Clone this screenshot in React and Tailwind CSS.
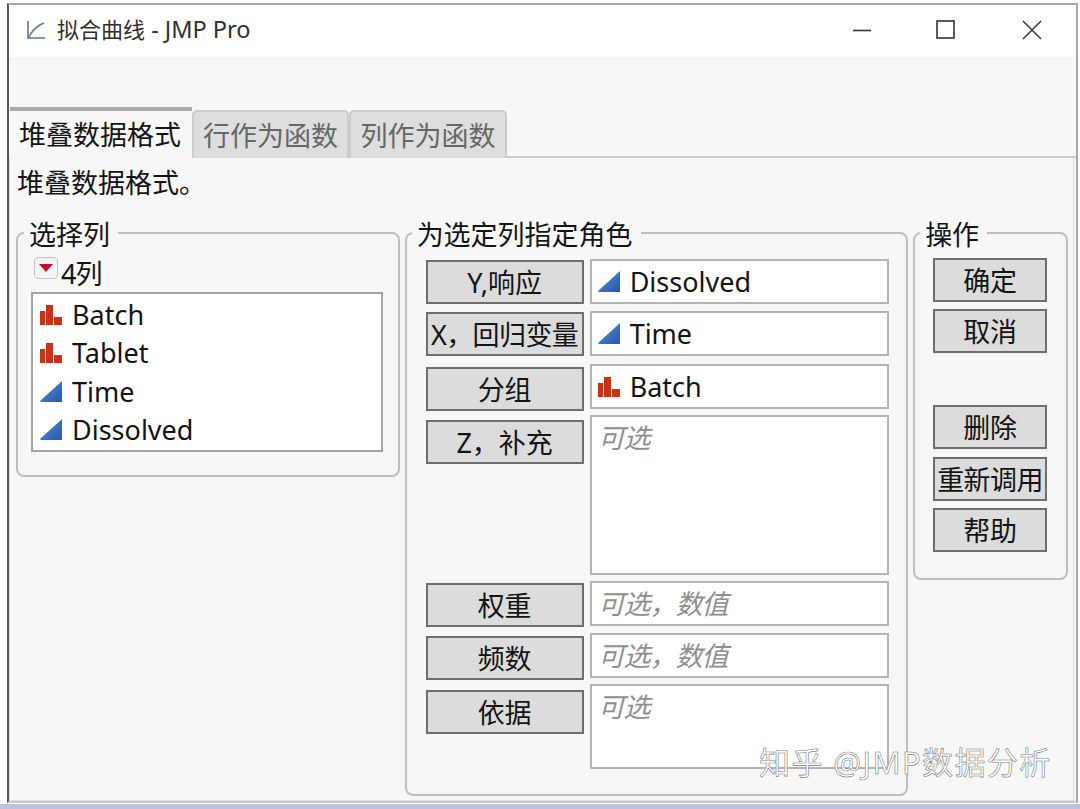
import React from 'react';

const font = { fontFamily: '"Noto Sans", "Noto Sans CJK SC", sans-serif' };

const ContinuousIcon = () => (
    <svg width="22" height="22" viewBox="0 0 22 22" className="shrink-0">
        <defs>
            <linearGradient id="tri" x1="0" y1="0" x2="1" y2="1">
                <stop offset="0" stopColor="#5a8edb" />
                <stop offset="1" stopColor="#2559a8" />
            </linearGradient>
        </defs>
        <path d="M0 20 L22 0 L22 21 L1 21 Z" fill="url(#tri)" />
    </svg>
);

const NominalIcon = () => (
    <svg width="22" height="22" viewBox="0 0 22 22" className="shrink-0">
        <path d="M0 7h5.2v14H0zM6 1h7v20H6zM14 13h8v8h-8z" fill="#cc3018" />
    </svg>
);

const ColumnItem = ({ type, name }) => (
    <div className="flex items-center h-[38.5px]">
        <div className="w-[32px] flex pt-[1px]">{type === 'nominal' ? <NominalIcon /> : <ContinuousIcon />}</div>
        <span className="text-[27px] leading-none text-[#141414]">{name}</span>
    </div>
);

const RoleButton = ({ label, mt, h = 'h-[44px]', tight }) => (
    <button className={`w-[158px] ${h} ${mt} bg-[#dcdcdc] border-2 border-[#6e6e6e] flex items-center justify-center leading-none text-[27px] text-[#141414] whitespace-nowrap ${tight ? 'tracking-[-0.6px]' : ''}`}>
        {label}
    </button>
);

const RoleField = ({ h, mt, children }) => (
    <div className={`w-[299px] ${h} ${mt} bg-white border-2 border-[#b4b4b4] flex items-start px-[4px] text-[27px] leading-none`}>
        {children}
    </div>
);

const Hint = ({ children }) => <span className="italic text-[#8f8f8f] mt-[7px] ml-[2px] tracking-[-1px]">{children}</span>;

const Filled = ({ type, name }) => (
    <div className="flex items-center h-full pl-[2px]">
        <div className="w-[32px] flex">{type === 'nominal' ? <NominalIcon /> : <ContinuousIcon />}</div>
        <span className="text-[#141414]">{name}</span>
    </div>
);

const ActionButton = ({ label, mt, tight }) => (
    <button className={`w-[114px] h-[44px] ${mt} bg-[#dcdcdc] border-2 border-[#6e6e6e] flex items-center justify-center leading-none text-[27px] text-[#141414] whitespace-nowrap ${tight ? 'tracking-[-0.5px]' : ''}`}>
        {label}
    </button>
);

const Group = ({ title, className, legendClass, children }) => (
    <fieldset className={`border-2 border-[#c0c0c0] rounded-[8px] min-w-0 ${className}`}>
        <legend className={`pl-[5px] pr-[8px] pt-[4px] text-[27px] leading-[30px] text-[#141414] whitespace-nowrap ${legendClass}`}>{title}</legend>
        {children}
    </fieldset>
);

export default function App() {
    return (
        <div style={font} className="relative w-[1080px] h-[809px] bg-white overflow-hidden pt-[3px] pl-[7px]">
            <div className="w-[1071px] h-[800px] bg-[#f7f7f7] border-2 border-t-[#a8a8a8] border-r-[#a8a8a8] border-l-[#555555] border-b-[#c8c8c8]">
                {/* title bar */}
                <div className="h-[52px] bg-white flex items-center pl-[17px] pb-[2px]">
                    <svg width="20" height="20" viewBox="0 0 20 20" className="shrink-0">
                        <path d="M2 1 V18 H19" fill="none" stroke="#5f7690" strokeWidth="1.6" />
                        <path d="M3 17 C6 11 10 6 18 3" fill="none" stroke="#5f7690" strokeWidth="1.6" />
                    </svg>
                    <span className="ml-[11px] text-[22px] leading-none text-[#303030] whitespace-nowrap">拟合曲线<span className="text-[23.5px]"> - JMP Pro</span></span>
                    <div className="ml-auto flex items-center text-[#333333]">
                        <svg width="20" height="20" viewBox="0 0 20 20" className="mr-[64px]"><path d="M1 10.5 H19" stroke="#333333" strokeWidth="1.6" /></svg>
                        <svg width="20" height="20" viewBox="0 0 20 20" className="mr-[65px]"><rect x="1" y="1" width="17" height="17" fill="none" stroke="#333333" strokeWidth="1.6" /></svg>
                        <svg width="22" height="22" viewBox="0 0 22 22" className="mr-[33px]"><path d="M2 2 L20 20 M20 2 L2 20" stroke="#333333" strokeWidth="1.5" /></svg>
                    </div>
                </div>

                {/* tabs */}
                <div className="flex items-end h-[101px] pl-[1px]">
                    <div className="w-[182px] h-[51px] bg-[#f7f7f7] border-t-[4px] border-[#aaaaaa] flex items-center pl-[9px] text-[27px] leading-none text-[#141414] whitespace-nowrap">堆叠数据格式</div>
                    <div className="w-[157px] h-[48px] bg-[#dedede] border-2 border-b-0 border-[#cccccc] rounded-t-[5px] flex items-center justify-center text-[27px] leading-none text-[#666666] whitespace-nowrap">行作为函数</div>
                    <div className="w-[158px] h-[48px] bg-[#dedede] border-2 border-b-0 border-[#cccccc] rounded-t-[5px] flex items-center justify-center text-[27px] leading-none text-[#666666] whitespace-nowrap">列作为函数</div>
                    <div className="flex-1 border-b-2 border-[#cccccc]" />
                </div>

                {/* tab body */}
                <div className="h-[643px] mr-[2px] border-x border-b border-[#dcdcdc] pl-[6px] pr-[5px]">
                    <div className="h-[46px] pl-[1px] pt-[11px] text-[27px] leading-none text-[#141414]">堆叠数据格式。</div>

                    <div className="flex items-start gap-[5px] mt-[12px]">
                        {/* column list */}
                        <Group title="选择列" className="w-[384px] h-[261px] px-[13px]" legendClass="-ml-[7px]">
                            <div className="flex items-center h-[38px] mt-[4px] pl-[3px]">
                                <div className="w-[24px] h-[22px] bg-[#f3f3f3] border border-[#c4c4c4] rounded-[4px] flex items-center justify-center mb-[10px]">
                                    <svg width="14" height="8" viewBox="0 0 14 8"><path d="M0 0 H14 L7 8 Z" fill="#c8102e" /></svg>
                                </div>
                                <span className="text-[27px] leading-none text-[#141414] tracking-[-1px] ml-[3px]">4列</span>
                            </div>
                            <div className="w-[352px] h-[160px] bg-white border-2 border-[#a4a4a4] pl-[7px] pt-[1px]">
                                <ColumnItem type="nominal" name="Batch" />
                                <ColumnItem type="nominal" name="Tablet" />
                                <ColumnItem type="continuous" name="Time" />
                                <ColumnItem type="continuous" name="Dissolved" />
                            </div>
                        </Group>

                        {/* roles */}
                        <Group title="为选定列指定角色" className="w-[504px] h-[580px] px-[19px]" legendClass="-ml-[14px]">
                            <div className="flex gap-[6px] mt-[9px]">
                                <div className="flex flex-col">
                                    <RoleButton label="Y,响应" mt="mt-[1px]" />
                                    <RoleButton label="X，回归变量" mt="mt-[8px]" tight />
                                    <RoleButton label="分组" mt="mt-[11px]" />
                                    <RoleButton label="Z，补充" mt="mt-[9px]" />
                                    <RoleButton label="权重" mt="mt-[119px]" />
                                    <RoleButton label="频数" mt="mt-[9px]" />
                                    <RoleButton label="依据" mt="mt-[10px]" />
                                </div>
                                <div className="flex flex-col">
                                    <RoleField h="h-[45px]"><Filled type="continuous" name="Dissolved" /></RoleField>
                                    <RoleField h="h-[45px]" mt="mt-[7px]"><Filled type="continuous" name="Time" /></RoleField>
                                    <RoleField h="h-[45px]" mt="mt-[8px]"><Filled type="nominal" name="Batch" /></RoleField>
                                    <RoleField h="h-[160px]" mt="mt-[6px]"><Hint>可选</Hint></RoleField>
                                    <RoleField h="h-[45px]" mt="mt-[6px]"><Hint>可选，数值</Hint></RoleField>
                                    <RoleField h="h-[45px]" mt="mt-[7px]"><Hint>可选，数值</Hint></RoleField>
                                    <RoleField h="h-[85px]" mt="mt-[6px]"><Hint>可选</Hint></RoleField>
                                </div>
                            </div>
                        </Group>

                        {/* actions */}
                        <Group title="操作" className="w-[155px] h-[364px] px-[18px]" legendClass="-ml-[13px]">
                            <div className="flex flex-col mt-[8px]">
                                <ActionButton label="确定" />
                                <ActionButton label="取消" mt="mt-[7px]" />
                                <ActionButton label="删除" mt="mt-[52px]" />
                                <ActionButton label="重新调用" mt="mt-[8px]" tight />
                                <ActionButton label="帮助" mt="mt-[7px]" />
                            </div>
                        </Group>
                    </div>
                </div>
            </div>

            {/* bottom strip of the window behind */}
            <div className="absolute left-0 right-0 bottom-0 h-[5px] bg-[#b9c4de]" />

            {/* watermark */}
            <div className="absolute left-[759px] top-[742px] text-[31px] leading-[40px] tracking-[1.4px] text-white whitespace-nowrap" style={{ WebkitTextStroke: '0.6px #808080' }}>
                知乎 @JMP数据分析
            </div>
        </div>
    );
}
